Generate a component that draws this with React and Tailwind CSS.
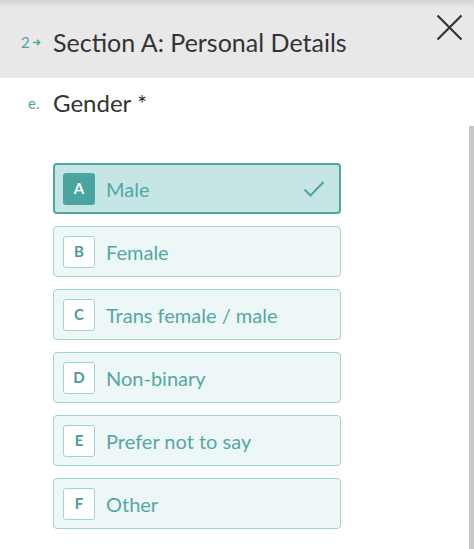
import React from "react";

const options = [
  { k: "A", label: "Male", selected: true },
  { k: "B", label: "Female" },
  { k: "C", label: "Trans female / male" },
  { k: "D", label: "Non-binary" },
  { k: "E", label: "Prefer not to say" },
  { k: "F", label: "Other" },
];

export default function App() {
  return (
    <div className="relative w-[474px] h-[549px] overflow-hidden bg-white" style={{ fontFamily: "Lato, 'Open Sans', sans-serif" }}>
      <div className="relative h-[78px] bg-[#e8e8e8]">
        <div className="absolute inset-x-0 top-0 h-[8px] bg-gradient-to-b from-[#d4d4d4] to-[#e8e8e8]" />
        <div className="flex items-center h-full pl-[21px] pt-[6px]">
          <div className="flex items-center w-[32px] text-[#4aa5a0] text-[15px]">
            <span>2</span>
            <svg width="11" height="11" viewBox="0 0 10 10" className="ml-[1px]">
              <path d="M2 5h6M5.5 2.5L8 5 5.5 7.5" fill="none" stroke="#4aa5a0" strokeWidth="1.2" />
            </svg>
          </div>
          <span className="text-[25px] text-[#333333] leading-none">Section A: Personal Details</span>
        </div>
        <svg className="absolute left-[436px] top-[14px]" width="27" height="27" viewBox="0 0 27 27">
          <path d="M1.5 1.5L25.5 25.5M25.5 1.5L1.5 25.5" stroke="#333" strokeWidth="2.2" />
        </svg>
      </div>
      <div className="flex items-center pl-[28px] mt-[13px] h-[24px]">
        <span className="w-[25px] text-[#4aa5a0] text-[15px]">e.</span>
        <span className="text-[24px] text-[#333333] leading-none">Gender *</span>
      </div>
      <div className="flex flex-col gap-[12px] pl-[53px] mt-[48px]">
        {options.map((o) =>
          o.selected ? (
            <div key={o.k} className="flex items-center w-[288px] h-[51px] rounded-[4px] border-2 border-[#4ea6a1] bg-[#c6e6e6] pl-[8px] pr-[14px]">
              <div className="flex items-center justify-center w-[32px] h-[32px] rounded-[3px] bg-[#4aa5a0] text-white font-bold text-[15px]">{o.k}</div>
              <span className="ml-[11px] text-[20px] text-[#54a7a2] flex-1">{o.label}</span>
              <svg width="22" height="18" viewBox="0 0 22 18">
                <path d="M1.5 9.5L7.5 15.5 20.5 2" fill="none" stroke="#4aa5a0" strokeWidth="2" />
              </svg>
            </div>
          ) : (
            <div key={o.k} className="flex items-center w-[288px] h-[51px] rounded-[4px] border border-[#a3d3d1] bg-[#eef7f8] pl-[9px]">
              <div className="flex items-center justify-center w-[32px] h-[32px] rounded-[3px] border border-[#a3d3d1] bg-white text-[#4a9c98] font-bold text-[15px]">{o.k}</div>
              <span className="ml-[11px] text-[20px] text-[#54a7a2]">{o.label}</span>
            </div>
          )
        )}
      </div>
      <div className="absolute right-0 top-[126px] w-[5px] h-[423px] bg-[#c8c8c8]" />
    </div>
  );
}
